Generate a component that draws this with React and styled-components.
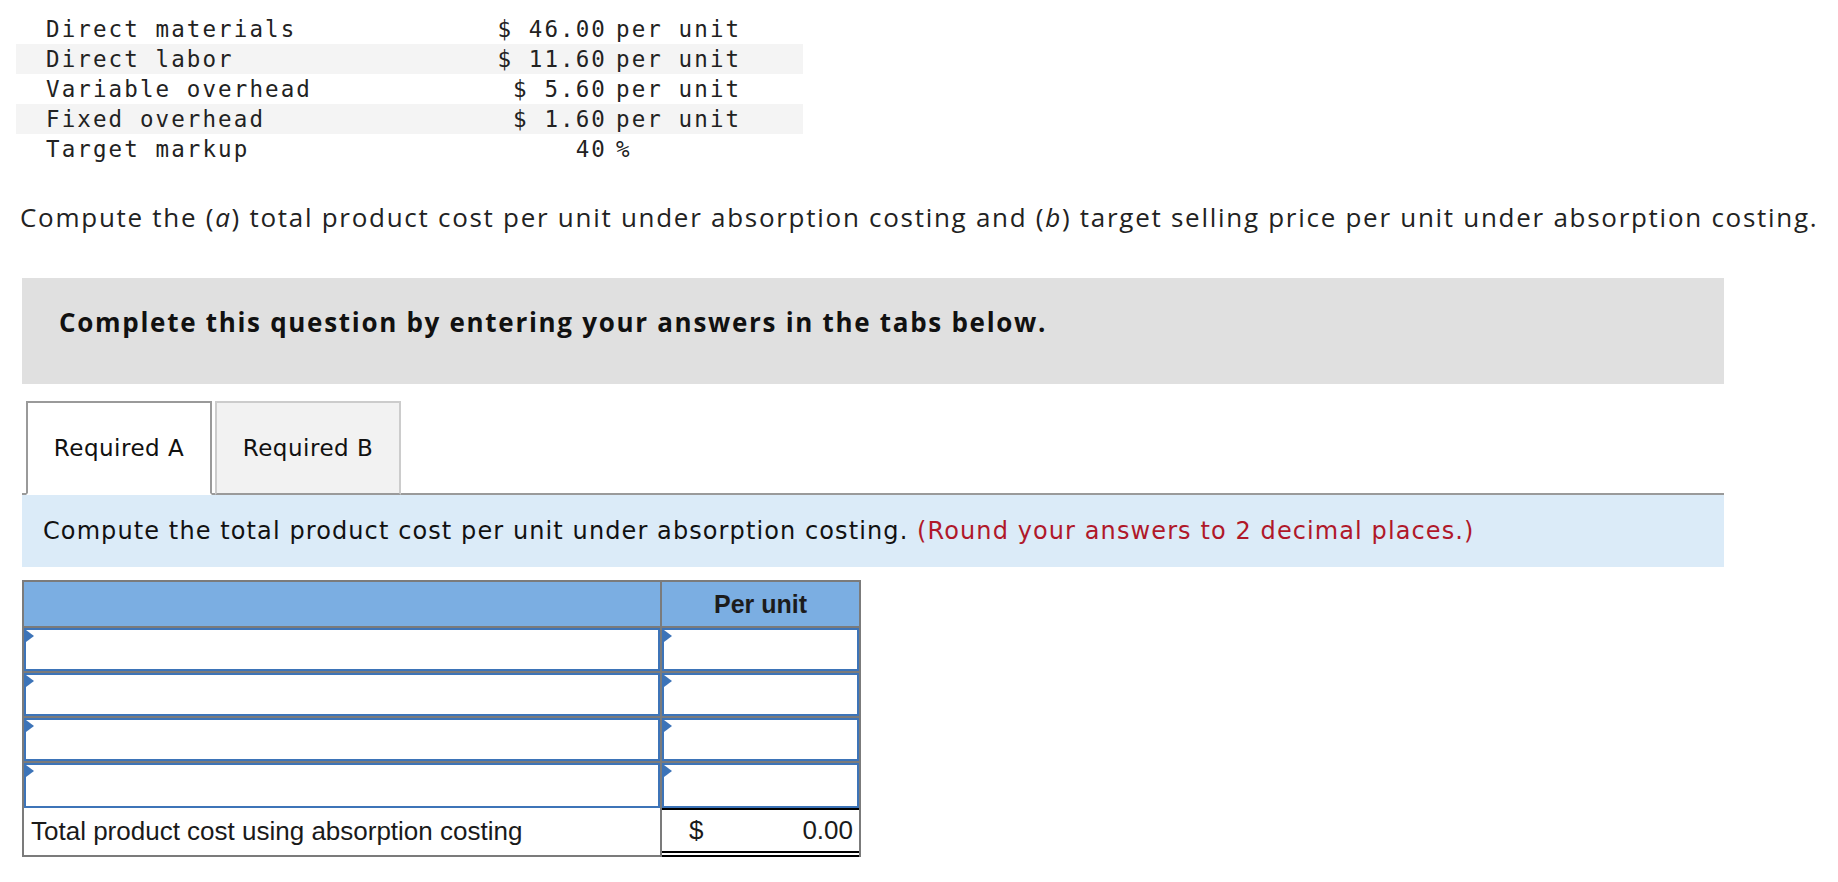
import styled, { createGlobalStyle } from 'styled-components';

const GlobalStyle = createGlobalStyle`
  body {
    margin: 0;
    background: #fff;
    color: #1a1a1a;
  }
`;

const Page = styled.div`
  padding: 14px 0 40px 22px;
`;

const DataTable = styled.div`
  margin-left: -6px;
  width: 787px;
  font-family: "DejaVu Sans Mono", monospace;
  font-size: 22.5px;
  letter-spacing: 2.1px;
  color: #222;
`;

const DataRow = styled.div`
  display: grid;
  grid-template-columns: 424px 128px 178px;
  column-gap: 9px;
  padding-left: 30px;
  height: 30px;
  line-height: 30px;
  background: ${p => (p.$shade ? '#f4f4f4' : 'transparent')};
  white-space: pre;
`;

const Value = styled.span`
  text-align: right;
`;

const Prompt = styled.p`
  margin: 37px 0 0 -2px;
  font-family: "Open Sans", Lato, sans-serif;
  font-size: 26px;
  letter-spacing: 1.72px;
  line-height: 32px;
  color: #222;
  white-space: nowrap;
`;

const Instruction = styled.div`
  margin-top: 45px;
  width: 1702px;
  height: 106px;
  box-sizing: border-box;
  padding: 28px 0 0 37px;
  background: #e0e0e0;
  font-family: "Open Sans", Lato, sans-serif;
  font-weight: 700;
  font-size: 26px;
  letter-spacing: 1.7px;
  line-height: 32px;
  color: #111;
`;

const TabBar = styled.div`
  display: flex;
  gap: 3px;
  margin-top: 17px;
  width: 1702px;
  padding-left: 4px;
  box-sizing: border-box;
  border-bottom: 2px solid #9a9a9a;
`;

const Tab = styled.div`
  width: 186px;
  height: 94px;
  box-sizing: border-box;
  margin-bottom: -2px;
  display: flex;
  align-items: center;
  justify-content: center;
  font-family: "DejaVu Sans", Verdana, sans-serif;
  font-size: 23px;
  letter-spacing: 0.5px;
  color: #111;
  background: ${p => (p.$active ? '#fff' : '#f2f2f2')};
  border: 2px solid ${p => (p.$active ? '#9a9a9a' : '#cccccc')};
  border-bottom: ${p => (p.$active ? '2px solid #fff' : '2px solid #9a9a9a')};
`;

const Hint = styled.div`
  width: 1702px;
  height: 72px;
  box-sizing: border-box;
  padding-left: 21px;
  display: flex;
  align-items: center;
  background: #dbebf8;
  font-family: "DejaVu Sans", Verdana, sans-serif;
  font-size: 24px;
  letter-spacing: 1.1px;
  color: #111;
  white-space: pre;
`;

const Red = styled.span`
  color: #b0182a;
`;

const Sheet = styled.div`
  margin-top: 13px;
  width: 839px;
  box-sizing: border-box;
  border: 2px solid #7b7b7b;
  border-bottom: none;
  font-family: "Liberation Sans", Arial, sans-serif;
  color: #1a1a1a;
`;

const Row = styled.div`
  display: grid;
  grid-template-columns: 638px 1fr;
  height: ${p => p.$h}px;
  box-sizing: border-box;
  border-bottom: ${p => (p.$line ? '2px solid #7b7b7b' : 'none')};
`;

const HeadCell = styled.div`
  background: #7baee2;
  border-right: ${p => (p.$divider ? '2px solid #7b7b7b' : 'none')};
  display: flex;
  align-items: center;
  justify-content: center;
  font-weight: 700;
  font-size: 25px;
  color: #1c1c1c;
`;

const InputCell = styled.div`
  display: flex;
  border-right: ${p => (p.$divider ? '2px solid #7b7b7b' : 'none')};
`;

const Field = styled.div`
  position: relative;
  flex: 1;
  border: 2px solid #3d74b8;
  background: #fff;

  &::before {
    content: '';
    position: absolute;
    top: 0;
    left: 0;
    border-top: 6px solid transparent;
    border-bottom: 6px solid transparent;
    border-left: 8px solid #3d74b8;
  }
`;

const TotalLabel = styled.div`
  border-right: 2px solid #7b7b7b;
  border-bottom: 2px solid #7b7b7b;
  display: flex;
  align-items: center;
  padding-left: 7px;
  font-size: 26px;
  white-space: nowrap;
`;

const TotalValue = styled.div`
  border-top: 2px solid #000;
  border-bottom: 6px double #000;
  display: flex;
  align-items: center;
  justify-content: space-between;
  padding: 0 6px 0 27px;
  font-size: 26px;
`;

const costs = [
  ['Direct materials', '$ 46.00', 'per unit'],
  ['Direct labor', '$ 11.60', 'per unit'],
  ['Variable overhead', '$ 5.60', 'per unit'],
  ['Fixed overhead', '$ 1.60', 'per unit'],
  ['Target markup', '40', '%'],
];

export default function App() {
  return (
    <>
      <GlobalStyle />
      <Page>
        <DataTable>
          {costs.map(([label, value, unit], i) => (
            <DataRow key={label} $shade={i % 2 === 1}>
              <span>{label}</span>
              <Value>{value}</Value>
              <span>{unit}</span>
            </DataRow>
          ))}
        </DataTable>

        <Prompt>
          Compute the (<i>a</i>) total product cost per unit under absorption costing and (<i>b</i>) target selling price per unit under absorption costing.
        </Prompt>

        <Instruction>Complete this question by entering your answers in the tabs below.</Instruction>

        <TabBar>
          <Tab $active>Required A</Tab>
          <Tab>Required B</Tab>
        </TabBar>

        <Hint>
          Compute the total product cost per unit under absorption costing. <Red>(Round your answers to 2 decimal places.)</Red>
        </Hint>

        <Sheet>
          <Row $h={46} $line>
            <HeadCell $divider />
            <HeadCell>Per unit</HeadCell>
          </Row>
          {[0, 1, 2, 3].map(i => (
            <Row key={i} $h={45} $line={i < 3}>
              <InputCell $divider>
                <Field />
              </InputCell>
              <InputCell>
                <Field />
              </InputCell>
            </Row>
          ))}
          <Row $h={49}>
            <TotalLabel>Total product cost using absorption costing</TotalLabel>
            <TotalValue>
              <span>$</span>
              <span>0.00</span>
            </TotalValue>
          </Row>
        </Sheet>
      </Page>
    </>
  );
}
